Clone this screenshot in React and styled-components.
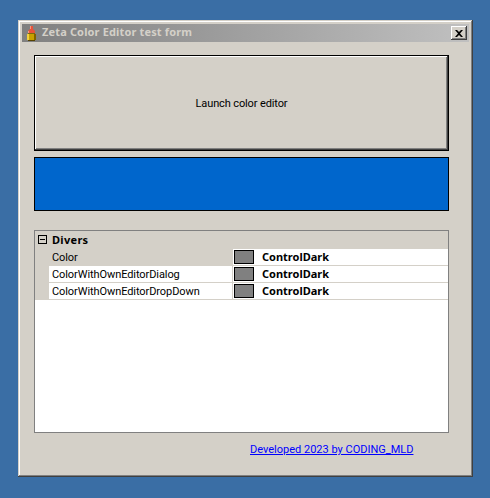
import React from 'react'
import styled, { createGlobalStyle } from 'styled-components'

const GlobalStyle = createGlobalStyle`
	html, body {
		margin: 0;
		padding: 0;
		background: #3a6ea5;
	}
	body {
		font-family: 'Roboto', 'Liberation Sans', sans-serif;
		font-size: 11px;
		color: #000;
	}
`

const Desktop = styled.div`
	width: 490px;
	height: 498px;
	padding: 20px 0 0 18px;
	box-sizing: border-box;
	overflow: hidden;
`

const Window = styled.div`
	width: 455px;
	height: 457px;
	box-sizing: border-box;
	padding: 4px;
	background: #d4d0c8;
	box-shadow:
		inset -1px -1px 0 #404040,
		inset 1px 1px 0 #d4d0c8,
		inset -2px -2px 0 #808080,
		inset 2px 2px 0 #fff;
`

const TitleBar = styled.div`
	height: 18px;
	display: flex;
	align-items: center;
	padding: 0 2px;
	gap: 2px;
	background: linear-gradient(90deg, #808080, #c0c0c0);
`

const TitleText = styled.span`
	flex: 1;
	font-family: 'Noto Sans', sans-serif;
	font-weight: bold;
	font-size: 11px;
	letter-spacing: 0.15px;
	line-height: 16px;
	padding-bottom: 2px;
	color: #d4d0c8;
`

const CloseButton = styled.button`
	width: 16px;
	height: 14px;
	padding: 0;
	border: none;
	display: flex;
	align-items: center;
	justify-content: center;
	background: #d4d0c8;
	box-shadow:
		inset -1px -1px 0 #404040,
		inset 1px 1px 0 #fff,
		inset -2px -2px 0 #808080;
`

const Content = styled.div`
	padding: 13px 20px 0 12px;
	display: flex;
	flex-direction: column;
`

const LaunchButton = styled.button`
	height: 96px;
	padding: 0;
	border: 1px solid #000;
	background: #d4d0c8;
	font-family: 'Roboto', 'Liberation Sans', sans-serif;
	font-size: 11px;
	letter-spacing: -0.12px;
	color: #000;
	box-shadow:
		inset -1px -1px 0 #404040,
		inset 1px 1px 0 #fff,
		inset -2px -2px 0 #808080;
`

const ColorPanel = styled.div`
	height: 54px;
	margin-top: 6px;
	box-sizing: border-box;
	border: 1px solid #000;
	background: #0066cc;
`

const PropertyGrid = styled.div`
	height: 203px;
	margin-top: 19px;
	box-sizing: border-box;
	border: 1px solid #808080;
	background: #fff;
`

const CategoryRow = styled.div`
	height: 18px;
	display: flex;
	align-items: center;
	padding: 0 0 1px 3px;
	box-sizing: border-box;
	gap: 5px;
	background: #d4d0c8;
	font-family: 'Noto Sans', sans-serif;
	font-weight: bold;
	letter-spacing: 0.3px;
`

const Expander = styled.span`
	width: 9px;
	height: 9px;
	box-sizing: border-box;
	border: 1px solid #000;
	background: #d4d0c8;
	display: flex;
	align-items: center;
	justify-content: center;

	&::after {
		content: '';
		width: 5px;
		height: 1px;
		background: #000;
	}
`

const PropertyRow = styled.div`
	height: 17px;
	box-sizing: border-box;
	display: grid;
	grid-template-columns: 14px 183px 1fr;
	background: #d4d0c8;
`

const NameCell = styled.div`
	grid-column: 2;
	height: 16px;
	line-height: 18px;
	padding-left: 3px;
	letter-spacing: -0.08px;
	white-space: nowrap;
	background: ${(p) => (p.$selected ? '#d4d0c8' : '#fff')};
`

const ValueCell = styled.div`
	height: 16px;
	margin-left: 1px;
	display: flex;
	align-items: center;
	gap: 8px;
	padding-left: 1px;
	background: #fff;
`

const Swatch = styled.span`
	width: 20px;
	height: 14px;
	box-sizing: border-box;
	border: 1px solid #000;
	background: #808080;
`

const ValueText = styled.span`
	font-family: 'Noto Sans', sans-serif;
	font-weight: bold;
	line-height: 16px;
`

const Footer = styled.div`
	margin-top: 9px;
	padding-left: 216px;
	line-height: 15px;
`

const FooterLink = styled.a`
	color: #0000ff;
	text-decoration: underline;
`

const rows = ['Color', 'ColorWithOwnEditorDialog', 'ColorWithOwnEditorDropDown']

function BrushIcon() {
	return (
		<svg width='16' height='16' viewBox='0 0 16 16'>
			<path d='M6 1h3v3l2 2v2H4V6l2-2z' fill='#e8533a' />
			<path d='M4 6h1v2H4zM6 1h1v3H6z' fill='#f59a80' />
			<rect x='4' y='8' width='7' height='1' fill='#7a6a10' />
			<rect x='3' y='9' width='9' height='6' fill='#c8a000' />
			<rect x='3' y='9' width='2' height='6' fill='#f0d040' />
			<rect x='10' y='9' width='2' height='6' fill='#806400' />
			<rect x='4' y='15' width='7' height='1' fill='#584400' />
		</svg>
	)
}

export default function App() {
	return (
		<Desktop>
			<GlobalStyle />
			<Window>
				<TitleBar>
					<BrushIcon />
					<TitleText>Zeta Color Editor test form</TitleText>
					<CloseButton>
						<svg width='8' height='7' viewBox='0 0 8 7'>
							<path
								d='M0 0h2l2 2 2-2h2L5 3.5 8 7H6L4 5 2 7H0l3-3.5z'
								fill='#000'
							/>
						</svg>
					</CloseButton>
				</TitleBar>

				<Content>
					<LaunchButton>Launch color editor</LaunchButton>
					<ColorPanel />

					<PropertyGrid>
						<CategoryRow>
							<Expander />
							Divers
						</CategoryRow>
						{rows.map((name, i) => (
							<PropertyRow key={name}>
								<NameCell $selected={i === 0}>{name}</NameCell>
								<ValueCell>
									<Swatch />
									<ValueText>ControlDark</ValueText>
								</ValueCell>
							</PropertyRow>
						))}
					</PropertyGrid>

					<Footer>
						<FooterLink href='#'>Developed 2023 by CODING_MLD</FooterLink>
					</Footer>
				</Content>
			</Window>
		</Desktop>
	)
}
